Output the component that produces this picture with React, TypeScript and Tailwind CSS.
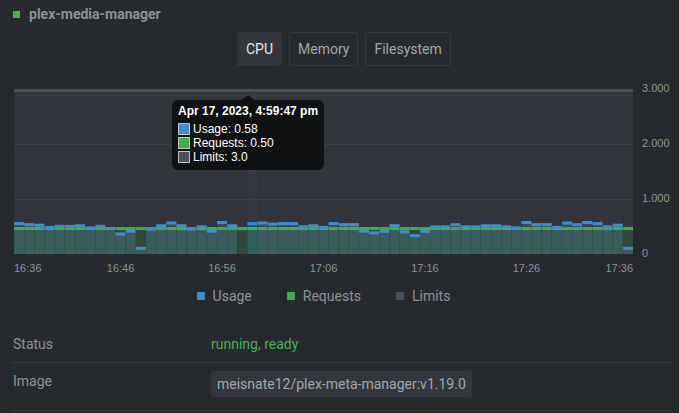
import React from 'react';

const usage: (number | null)[] = [
  0.58, 0.56, 0.55, 0.51, 0.53, 0.53, 0.54, 0.5, 0.53, 0.49,
  0.39, 0.44, 0.13, 0.48, 0.54, 0.59, 0.54, 0.48, 0.52, 0.44,
  0.6, 0.54, null, 0.58, 0.59, 0.57, 0.58, 0.58, 0.52, 0.54,
  0.51, 0.58, 0.56, 0.56, 0.44, 0.41, 0.44, 0.54, 0.43, 0.36,
  0.44, 0.52, 0.52, 0.56, 0.52, 0.52, 0.54, 0.54, 0.52, 0.5,
  0.6, 0.56, 0.56, 0.51, 0.59, 0.56, 0.6, 0.58, 0.52, 0.55, 0.13,
];

const LEFT = 14;
const RIGHT = 633;
const BASE = 174;
const UNIT = 55;
const BW = (RIGHT - LEFT) / usage.length;
const HOVER = 23;
const REQ = 0.49;

const yOf = (v: number) => BASE - v * UNIT;

function Chart() {
  const reqTop = yOf(REQ);
  const xLabels = ['16:36', '16:46', '16:56', '17:06', '17:16', '17:26', '17:36'];

  return (
    <svg width={679} height={200} className="block">
      <rect x={LEFT} y={9} width={RIGHT - LEFT} height={BASE - 9} fill="#32363c" />
      <rect x={LEFT + HOVER * BW} y={9} width={BW} height={BASE - 9} fill="#ffffff" opacity={0.025} />
      <line x1={LEFT} x2={RIGHT} y1={64.5} y2={64.5} stroke="#3e4248" />
      <line x1={LEFT} x2={RIGHT} y1={119.5} y2={119.5} stroke="#3e4248" />

      {usage.map((u, i) => {
        const x = LEFT + i * BW;
        const hov = i === HOVER;
        const uTop = u == null ? null : yOf(u);
        return (
          <g key={i}>
            <rect x={x} y={reqTop} width={BW} height={BASE - reqTop} fill={hov ? '#2f4d3a' : '#34483a'} />
            {uTop != null && (
              <>
                <rect
                  x={x}
                  y={Math.max(uTop, reqTop)}
                  width={BW}
                  height={BASE - Math.max(uTop, reqTop)}
                  fill={hov ? '#2b6161' : '#3b5c5d'}
                />
                {uTop < reqTop && (
                  <rect x={x} y={uTop} width={BW} height={reqTop - uTop} fill="#364b60" />
                )}
              </>
            )}
            <rect x={x} y={reqTop} width={BW} height={3} fill={hov ? '#2ec05c' : '#41ad4b'} />
            {uTop != null && (
              <rect x={x} y={uTop} width={BW} height={3} fill={hov ? '#2b8ae2' : '#3f8dcc'} />
            )}
          </g>
        );
      })}

      {usage.map((_, i) => (
        <line
          key={i}
          x1={LEFT + i * BW + 0.5}
          x2={LEFT + i * BW + 0.5}
          y1={9}
          y2={BASE}
          stroke="#000000"
          opacity={0.05}
        />
      ))}

      <rect x={LEFT} y={9} width={RIGHT - LEFT} height={3} fill="#4a4f58" />

      <g fill="#8e9297" fontSize={11} fontFamily="'Liberation Sans', Arial, sans-serif">
        {['3.000', '2.000', '1.000', '0'].map((t, i) => (
          <text key={t} x={642} y={9 + i * UNIT} dominantBaseline="middle">
            {t}
          </text>
        ))}
        {xLabels.map((t, i) => {
          const cx = LEFT + (i * 10 + 0.5) * BW;
          if (i === 0)
            return (
              <text key={t} x={LEFT} y={189} dominantBaseline="middle">
                {t}
              </text>
            );
          if (i === xLabels.length - 1)
            return (
              <text key={t} x={RIGHT} y={189} textAnchor="end" dominantBaseline="middle">
                {t}
              </text>
            );
          return (
            <text key={t} x={cx} y={189} textAnchor="middle" dominantBaseline="middle">
              {t}
            </text>
          );
        })}
      </g>
    </svg>
  );
}

function Tooltip() {
  const rows = [
    { label: 'Usage: 0.58', color: 'bg-[#3f8dcc]' },
    { label: 'Requests: 0.50', color: 'bg-[#41ad4b]' },
    { label: 'Limits: 3.0', color: 'bg-[#4a4f58]' },
  ];
  return (
    <div className="absolute left-[172px] top-[20px] h-[70px] w-[152px] rounded-[6px] bg-[#101113] px-[6px] pt-[4px] font-['Liberation_Sans',Arial,sans-serif] text-[12px] text-white">
      <div className="absolute left-[70px] top-[-5px] h-0 w-0 border-x-[6px] border-b-[5px] border-x-transparent border-b-[#101113]" />
      <div className="whitespace-nowrap font-bold leading-[14px]">Apr 17, 2023, 4:59:47 pm</div>
      <div className="mt-[4px]">
        {rows.map((r) => (
          <div key={r.label} className="flex h-[14px] items-center gap-[3px]">
            <span className={`h-[12px] w-[12px] border border-[#c4c4c4] ${r.color}`} />
            <span className="whitespace-nowrap leading-[14px]">{r.label}</span>
          </div>
        ))}
      </div>
    </div>
  );
}

export default function App() {
  const tabs = ['CPU', 'Memory', 'Filesystem'];
  const legend = [
    { label: 'Usage', color: 'bg-[#3f8dcc]' },
    { label: 'Requests', color: 'bg-[#41ad4b]' },
    { label: 'Limits', color: 'bg-[#4a4f58]' },
  ];

  return (
    <div className="h-[413px] w-[679px] overflow-hidden bg-[#262a2f] font-['Roboto',sans-serif]">
      <div className="flex h-[28px] items-center gap-[9px] pl-[13px]">
        <span className="h-[7px] w-[7px] bg-[#4caf50]" />
        <span className="text-[14px] font-bold text-[#8d9196]">plex-media-manager</span>
      </div>

      <div className="mt-[4px] flex gap-[7px] pl-[237px]">
        {tabs.map((t, i) => (
          <div
            key={t}
            className={
              i === 0
                ? 'flex h-[34px] items-center rounded-[3px] border border-[#33373d] bg-[#33373d] px-[8px] text-[14px] text-[#e8e8e8]'
                : 'flex h-[34px] items-center rounded-[3px] border border-[#363a40] px-[8px] text-[14px] text-[#a3a6aa]'
            }
          >
            {t}
          </div>
        ))}
      </div>

      <div className="relative mt-[14px]">
        <Chart />
        <Tooltip />
      </div>

      <div className="ml-[14px] flex h-[32px] w-[619px] items-center justify-center gap-[35px]">
        {legend.map((l) => (
          <div key={l.label} className="flex items-center gap-[8px]">
            <span className={`h-[8px] w-[8px] rounded-[1px] ${l.color}`} />
            <span className="text-[14px] text-[#8e9297]">{l.label}</span>
          </div>
        ))}
      </div>

      <div className="ml-[13px] mt-[14px] w-[660px] text-[14px]">
        <div className="flex h-[37px] items-center border-b border-[#363a40]">
          <span className="w-[198px] text-[#8e9297]">Status</span>
          <span className="text-[#4caf50]">running, ready</span>
        </div>
        <div className="flex h-[48px] items-start border-b border-[#363a40] pt-[8px]">
          <span className="w-[198px] leading-[20px] text-[#8e9297]">Image</span>
          <span className="rounded-[3px] bg-[#33373d] px-[6px] leading-[26px] text-[#a3a6aa]">
            meisnate12/plex-meta-manager:v1.19.0
          </span>
        </div>
      </div>
    </div>
  );
}
